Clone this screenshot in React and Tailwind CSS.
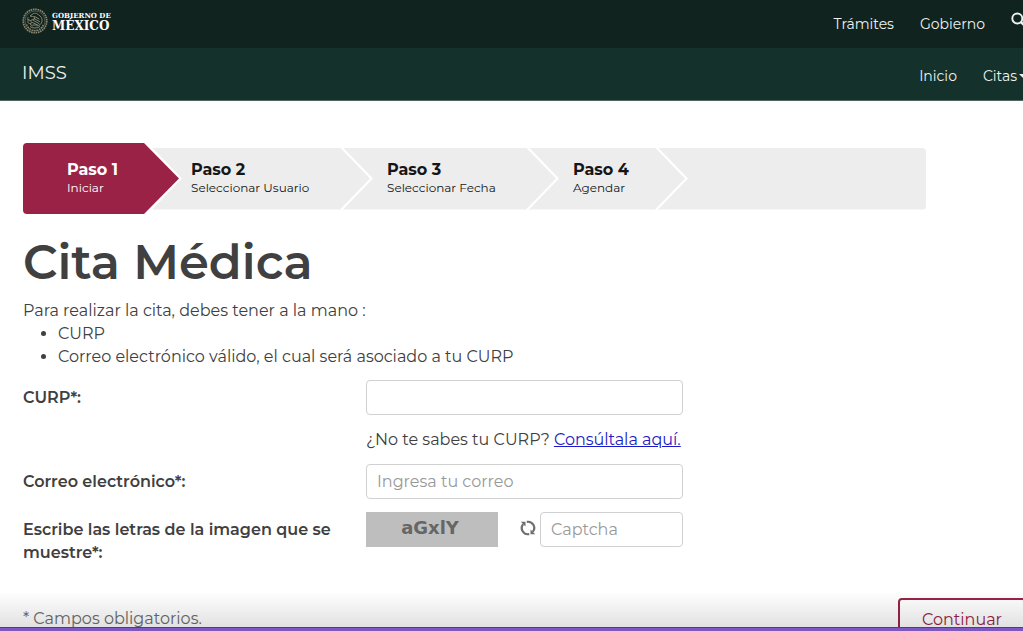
import React from "react";

function Emblem() {
  return (
    <svg viewBox="0 0 52 52" className="size-[26px] shrink-0" fill="none" stroke="#8a866f" aria-hidden="true">
      <circle cx="26" cy="26" r="23.5" strokeWidth="3.5" strokeDasharray="3.2 1.4" />
      <circle cx="26" cy="26" r="20" strokeWidth="1" />
      <g strokeWidth="2" strokeLinecap="round" strokeLinejoin="round">
        <path d="M20 13c4-4 10-3 13 1 5 2 8 7 7 13-1 5-5 8-10 9" />
        <path d="M20 13l-4 3 5 1c3 0 5 2 4 5l-8 3-5-2" />
        <path d="M25 17l9 5M24 21l11 6M23 25l11 6M21 29l10 5" />
        <path d="M12 19c-2 3 1 5 0 8s2 5 5 4M16 25l4 4-4 3 5 4" />
      </g>
      <path d="M9 33c4 9 11 12 17 12s13-3 17-12" strokeWidth="3" strokeDasharray="3 2" />
      <path d="M16 37c6 4 14 4 20 0M21 34h10" strokeWidth="2" />
    </svg>
  );
}

function SearchIcon() {
  return (
    <svg viewBox="0 0 16 16" className="size-4" fill="none" stroke="currentColor" aria-hidden="true">
      <circle cx="6.3" cy="6.5" r="5" strokeWidth="1.9" />
      <path d="M10.2 10.3l4.4 4.2" strokeWidth="2.4" strokeLinecap="round" />
    </svg>
  );
}

function RefreshIcon() {
  return (
    <svg viewBox="0 0 16 16" className="size-4" aria-hidden="true">
      <g fill="none" stroke="#6e6e6e" strokeWidth="2.2">
        <path d="M9.2 14.1A6.2 6.2 0 0 1 3.2 4.1" />
        <path d="M6.800 1.900A6.200 6.200 0 0 1 12.800 11.900" />
      </g>
      <path d="M.8 1.800h4.700v4.700z" fill="#6e6e6e" />
      <path d="M15.200 14.200H10.500V9.500z" fill="#6e6e6e" />
    </svg>
  );
}

const chevron =
  "bg-[#ededed] -ml-[27px] h-[62px] pt-[13px] [clip-path:polygon(0_0,calc(100%_-_30px)_0,100%_50%,calc(100%_-_30px)_100%,0_100%,30px_50%)]";

const steps = [
  { title: "Paso 2", text: "Seleccionar Usuario", size: "w-[218px] pl-[39px]" },
  { title: "Paso 3", text: "Seleccionar Fecha", size: "w-[213px] pl-[44px]" },
  { title: "Paso 4", text: "Agendar", size: "w-[156px] pl-[44px]" },
];

const field =
  "h-[35px] w-full rounded border border-[#d0d0d0] bg-white px-2.5 text-base text-[#444] outline-none placeholder:text-[#999]";

export default function App() {
  return (
    <div className="relative flex h-screen flex-col overflow-hidden bg-white font-['Montserrat','Inter',sans-serif] text-base text-[#404041]">
      <header className="shrink-0 text-sm text-[#eef2f0]">
        <div className="flex h-12 justify-between bg-[#10231f] pl-[22px]">
          <a href="#mexico" className="flex items-center gap-1 self-start pt-2">
            <Emblem />
            <span className="flex flex-col font-['DejaVu_Serif',serif] font-bold text-white">
              <span className="text-[7px] leading-[9px]">GOBIERNO DE</span>
              <span className="text-[12px] leading-[12px]">MÉXICO</span>
            </span>
          </a>
          <nav className="-mr-1 flex items-center gap-[26px]">
            <a href="#tramites">Trámites</a>
            <a href="#gobierno">Gobierno</a>
            <button type="button" aria-label="Buscar" className="pb-2">
              <SearchIcon />
            </button>
          </nav>
        </div>
        <div className="flex h-[53px] items-center justify-between border-b border-[#4d6962] bg-[#14312b] pl-[22px]">
          <a href="#imss" className="pb-0.5 text-lg">IMSS</a>
          <nav className="-mr-1 flex items-center gap-[26px] pt-1">
            <a href="#inicio">Inicio</a>
            <button type="button" className="flex items-center gap-0.5">
              Citas
              <svg viewBox="0 0 8 4" className="h-1 w-2" fill="currentColor" aria-hidden="true">
                <path d="M0 0h8L4 4z" />
              </svg>
            </button>
          </nav>
        </div>
      </header>

      <main className="px-[23px] pt-[42px]">
        <ol className="flex max-w-[903px] items-center leading-[18px] text-[#161616]">
          <li className="h-[71px] w-[156px] shrink-0 rounded-l bg-[#9b2247] pt-[18px] pl-11 text-white [clip-path:polygon(0_0,calc(100%_-_35px)_0,100%_50%,calc(100%_-_35px)_100%,0_100%)]">
            <strong className="block font-bold">Paso 1</strong>
            <span className="block text-xs leading-[18px]">Iniciar</span>
          </li>
          {steps.map((s) => (
            <li key={s.title} className={`${chevron} ${s.size} shrink-0`}>
              <strong className="block font-bold">{s.title}</strong>
              <span className="block text-xs leading-[18px]">{s.text}</span>
            </li>
          ))}
          <li
            aria-hidden="true"
            className="-ml-[27px] h-[62px] flex-1 rounded-r bg-[#ededed] [clip-path:polygon(0_0,100%_0,100%_100%,0_100%,30px_50%)]"
          />
        </ol>

        <h1 className="mt-5 text-[48px] leading-[56px] font-semibold">Cita Médica</h1>

        <p className="mt-[9px] leading-[23px]">Para realizar la cita, debes tener a la mano :</p>
        <ul className="list-disc pl-[35px] leading-[23px]">
          <li>CURP</li>
          <li>Correo electrónico válido, el cual será asociado a tu CURP</li>
        </ul>

        <form onSubmit={(e) => e.preventDefault()}>
          <div className="mt-3 grid max-w-[660px] grid-cols-[343px_1fr] gap-y-[13px]">
            <label htmlFor="curp" className="pt-1.5 leading-[23px] font-semibold">CURP*:</label>
            <div>
              <input id="curp" type="text" className={field} />
              <p className="mt-[13px] leading-[23px]">
                ¿No te sabes tu CURP?{" "}
                <a href="#consulta" className="text-[#1a1ac8] underline">Consúltala aquí.</a>
              </p>
            </div>
            <label htmlFor="correo" className="pt-1.5 leading-[23px] font-semibold">Correo electrónico*:</label>
            <input id="correo" type="email" placeholder="Ingresa tu correo" className={field} />
            <label htmlFor="captcha" className="pt-1.5 pr-6 leading-[23px] font-semibold">
              Escribe las letras de la imagen que se muestre*:
            </label>
            <div className="flex items-start">
              <div className="flex h-[35px] w-[132px] items-center justify-center bg-[#bebebe] pr-1 pb-1 font-['DejaVu_Sans',sans-serif] text-lg font-bold text-[#666]">
                aGxlY
              </div>
              <button type="button" aria-label="Actualizar captcha" className="mt-2 ml-[22px] mr-1">
                <RefreshIcon />
              </button>
              <div className="min-w-0 flex-1">
                <input id="captcha" type="text" placeholder="Captcha" className={field} />
              </div>
            </div>
          </div>
          <div className="mt-[34px] -mr-[26px] flex items-start justify-between">
            <p className="pt-[9px] leading-[23px] text-[#6b6b6b]">* Campos obligatorios.</p>
            <button type="submit" className="h-11 rounded border-2 border-[#9b2247] px-[22px] text-[#9b2247]">
              Continuar
            </button>
          </div>
        </form>
      </main>

      <div
        aria-hidden="true"
        className="pointer-events-none absolute inset-x-0 bottom-0 h-10 border-b-[3px] border-[#7e57c2] bg-linear-to-b from-transparent to-black/12"
      >
        <div className="absolute inset-x-0 bottom-0 h-px bg-[#4b4658]" />
      </div>
    </div>
  );
}
